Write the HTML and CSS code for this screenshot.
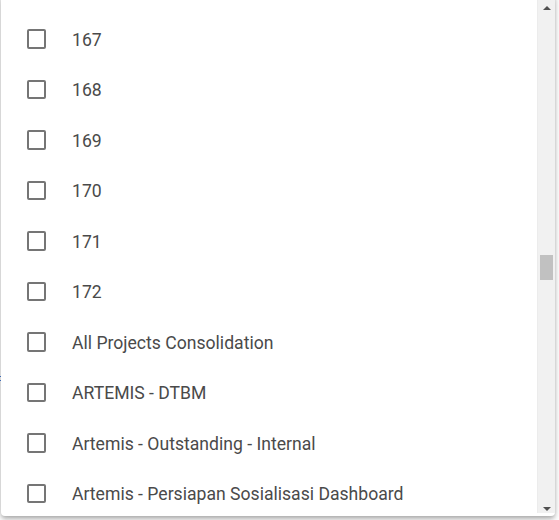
FILE: index.html
```html
<!DOCTYPE html>
<html>
<head>
<meta charset="utf-8">
<link rel="stylesheet" href="styles.css">
</head>
<body>
<div class="page">
  <span class="bg-mark"></span>
  <div class="panel">
    <div class="list">
      <div class="row"><span class="box"></span><span class="label">167</span></div>
      <div class="row"><span class="box"></span><span class="label">168</span></div>
      <div class="row"><span class="box"></span><span class="label">169</span></div>
      <div class="row"><span class="box"></span><span class="label">170</span></div>
      <div class="row"><span class="box"></span><span class="label">171</span></div>
      <div class="row"><span class="box"></span><span class="label">172</span></div>
      <div class="row"><span class="box"></span><span class="label">All Projects Consolidation</span></div>
      <div class="row"><span class="box"></span><span class="label">ARTEMIS - DTBM</span></div>
      <div class="row"><span class="box"></span><span class="label">Artemis - Outstanding - Internal</span></div>
      <div class="row"><span class="box"></span><span class="label">Artemis - Persiapan Sosialisasi Dashboard</span></div>
    </div>
    <div class="scrollbar">
      <span class="arrow up"></span>
      <div class="track"><span class="thumb"></span></div>
      <span class="arrow down"></span>
    </div>
  </div>
</div>
</body>
</html>
```
FILE: styles.css
```css
html, body {
  margin: 0;
  padding: 0;
  background: #fff;
  width: 559px;
  height: 520px;
  overflow: hidden;
}
.page {
  position: relative;
  width: 559px;
  height: 520px;
  font-family: Roboto, "Liberation Sans", sans-serif;
}
.bg-mark {
  position: absolute;
  left: 0;
  top: 376px;
  width: 2px;
  height: 5px;
  border-top: 1px solid #4a7fd6;
  border-bottom: 1px solid #4a7fd6;
  box-sizing: border-box;
}
.panel {
  position: absolute;
  left: 1px;
  top: -6px;
  width: 554px;
  height: 522px;
  background: #fff;
  border-radius: 4px;
  box-shadow: 0 2px 4px -1px rgba(0,0,0,0.2), 0 4px 5px 0 rgba(0,0,0,0.14), 0 1px 10px 0 rgba(0,0,0,0.12);
  display: flex;
  overflow: hidden;
}
.list {
  flex: 1;
  padding-top: 19.75px;
}
.row {
  height: 50.5px;
  display: flex;
  align-items: center;
}
.box {
  width: 19.5px;
  height: 19.5px;
  box-sizing: border-box;
  border: 2.2px solid #757575;
  border-radius: 2px;
  margin-left: 25.5px;
  margin-right: 26px;
  flex: none;
}
.label {
  font-size: 17.6px;
  color: #4a4a4a;
  padding-top: 1px;
}
.scrollbar {
  width: 17px;
  background: #f1f1f1;
  display: flex;
  flex-direction: column;
  align-items: center;
  border-left: 1px solid #ececec;
  margin-bottom: 3px;
}
.arrow {
  width: 0;
  height: 0;
  border-left: 4px solid transparent;
  border-right: 4px solid transparent;
  flex: none;
}
.arrow.up {
  margin-top: 12px;
  border-bottom: 4px solid #505050;
}
.arrow.down {
  margin-bottom: 2px;
  border-top: 4px solid #505050;
}
.track {
  flex: 1;
  width: 100%;
  position: relative;
}
.thumb {
  position: absolute;
  left: 2px;
  right: 2px;
  top: 245px;
  height: 25px;
  background: #c1c1c1;
}
```
